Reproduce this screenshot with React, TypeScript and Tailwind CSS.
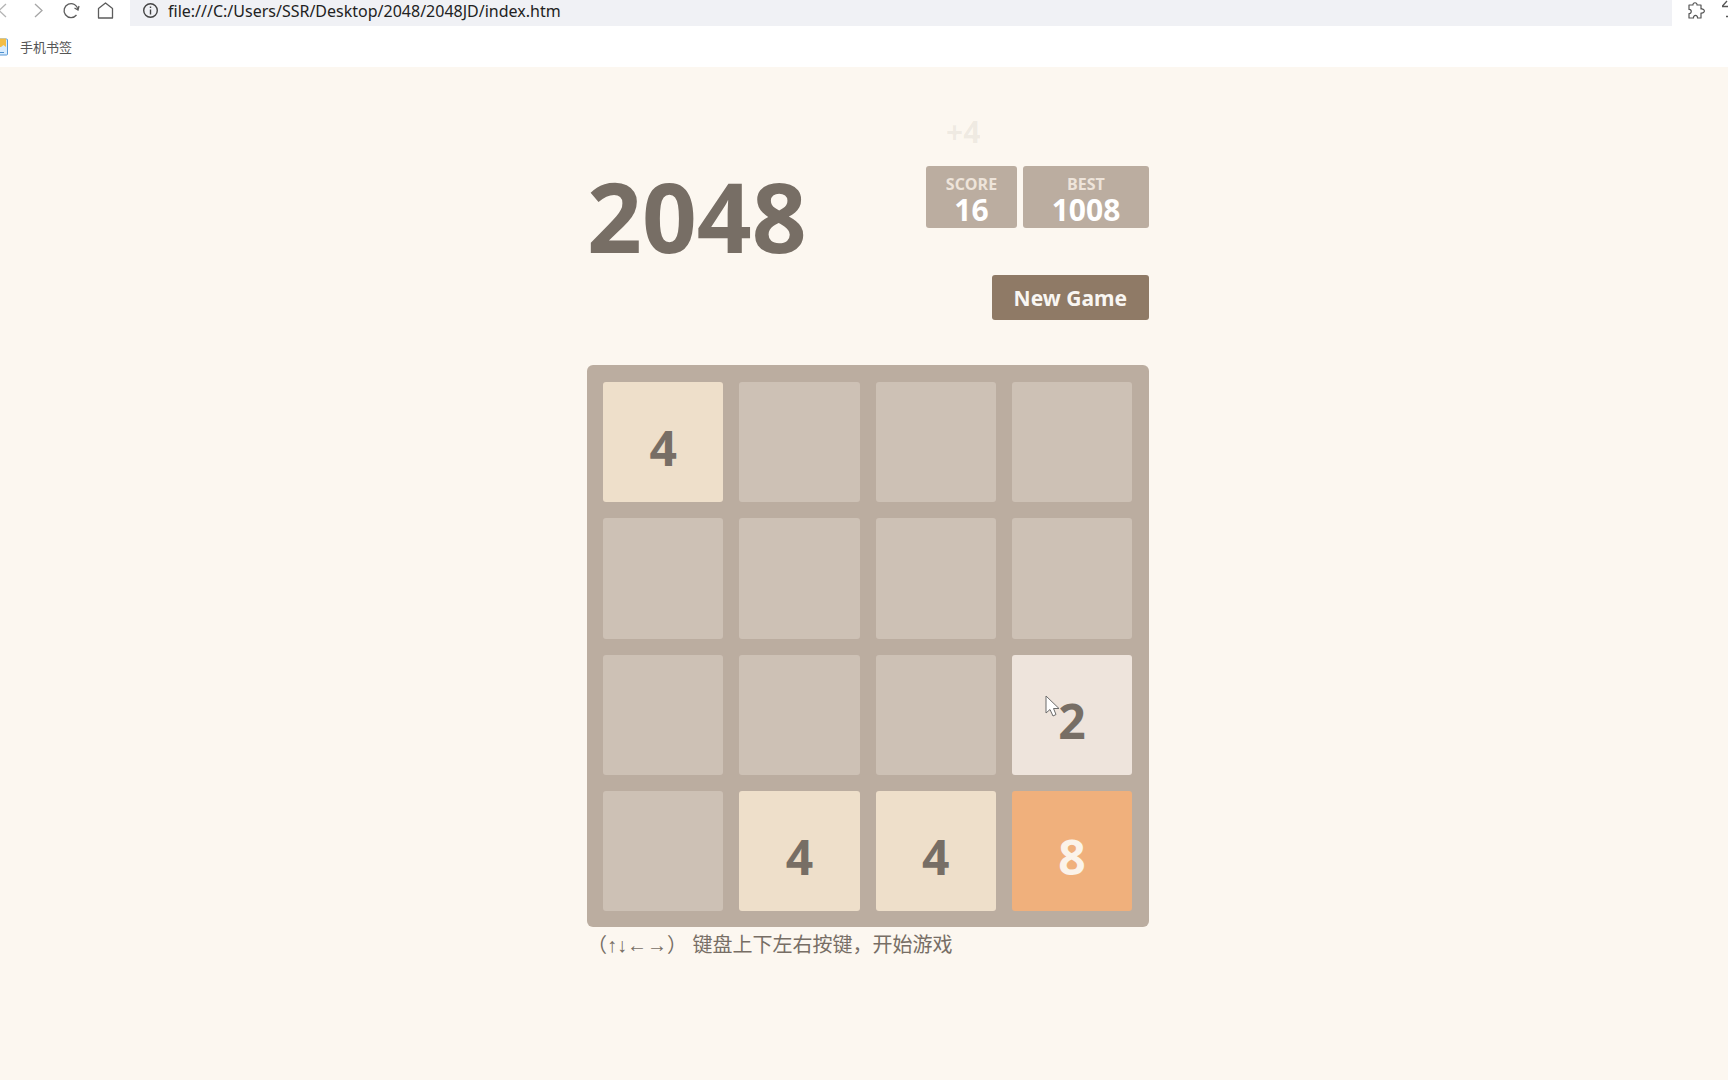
const LETTER = "font-['Noto_Sans','Noto_Sans_CJK_SC',sans-serif]";

const cells = [4, 0, 0, 0, 0, 0, 0, 0, 0, 0, 0, 2, 0, 4, 4, 8];

const tileStyles: Record<number, string> = {
  2: "bg-[#eee4dc] text-[#776e65]",
  4: "bg-[#eedfca] text-[#776e65]",
  8: "bg-[#f0b07c] text-[#fbf3ea]",
};

function Browser() {
  return (
    <header className="bg-white">
      {/* Address bar */}
      <div className="flex h-[26px] items-start text-[#5c5c5c]">
        <nav className="flex w-[130px] shrink-0 items-start">
          <button aria-label="Back" className="h-[22px] w-[18px]">
            <svg width="18" height="22" viewBox="0 0 18 22" fill="none" stroke="#b4b4b4" strokeWidth="1.3">
              <path d="M6 4L-1 10.5L6 17" />
            </svg>
          </button>
          <button aria-label="Forward" className="h-[22px] w-[42px]">
            <svg width="42" height="22" viewBox="0 0 42 22" fill="none" stroke="#a6a6a6" strokeWidth="1.3">
              <path d="M17 4L24 10.5L17 17" />
            </svg>
          </button>
          <button aria-label="Reload" className="h-[22px] w-[34px]">
            <svg width="34" height="22" viewBox="0 0 34 22" fill="none" stroke="#5c5c5c" strokeWidth="1.3">
              <path d="M16.5 15A7 7 0 1 1 18 9.5M14.5 8L18 10L19 6" />
            </svg>
          </button>
          <button aria-label="Home" className="h-[22px] w-[34px]">
            <svg width="34" height="22" viewBox="0 0 34 22" fill="none" stroke="#5c5c5c" strokeWidth="1.3" strokeLinejoin="round">
              <path d="M4.5 8.5L11.5 3L18.5 8.5V18H4.5Z" />
            </svg>
          </button>
        </nav>
        <div className="flex h-[26px] flex-1 items-start bg-[#f0f1f5] pl-3">
          <svg className="shrink-0" width="26" height="22" viewBox="0 0 26 22" fill="none" stroke="#444" strokeWidth="1.4">
            <circle cx="8.5" cy="10.5" r="6.8" />
            <path d="M8.5 9.5V14.5M8.5 6.5V8" />
          </svg>
          <input
            aria-label="Address"
            className="h-[22px] min-w-0 flex-1 bg-transparent text-base leading-[22px] text-[#222] outline-none"
            defaultValue="file:///C:/Users/SSR/Desktop/2048/2048JD/index.htm"
          />
        </div>
        <div className="flex w-14 shrink-0 items-start overflow-hidden pl-4">
          <button aria-label="Extensions" className="h-[22px] w-[34px] shrink-0">
            <svg width="18" height="22" viewBox="0 0 18 22" fill="none" stroke="#555" strokeWidth="1.2" strokeLinejoin="round">
              <path d="M1 5H5C4.5 2 9.5 2 9 5H13V9C17.5 8.5 17.5 13.5 13 13V18H9.5C10 14.5 5 14.5 5.5 18H1V13.5C4 14 4 9 1 9.5Z" />
            </svg>
          </button>
          <button aria-label="Undo" className="h-[22px] w-5 shrink-0">
            <svg width="20" height="22" viewBox="0 0 20 22" fill="none" stroke="#555" strokeWidth="1.3">
              <path d="M5 1L0 6.5H12M4 16.5H8" />
            </svg>
          </button>
        </div>
      </div>
      {/* Bookmarks */}
      <div className="flex h-[41px] items-center">
        <a href="#bookmarks" className="flex items-center gap-3 text-[13px] leading-5 text-[#555]">
          <svg width="8" height="18" viewBox="0 0 8 18">
            <rect x="-8" y="1" width="15.5" height="16" rx="1" fill="#d9ecfd" stroke="#5a98d4" />
            <path d="M0 0.5H6V9L3.5 7L1 9H0Z" fill="#f3bd45" />
            <path d="M0 14.5H4" stroke="#4b8fd0" />
          </svg>
          手机书签
        </a>
      </div>
    </header>
  );
}

function ScoreBox({ label, value, gain, size }: { label: string; value: number; gain?: number; size: string }) {
  return (
    <div className={`relative h-[62px] rounded-[3px] bg-[#bbada0] pt-2 text-center font-bold ${size}`}>
      <div className="font-['Open_Sans',sans-serif] text-base leading-5 text-[#eee4da]">{label}</div>
      <div className="text-3xl leading-8 text-white">{value}</div>
      {gain && (
        <div className="absolute -top-[54px] left-5 text-3xl leading-10 text-[#776e65]/10">+{gain}</div>
      )}
    </div>
  );
}

function Board() {
  return (
    <div className="grid grid-cols-4 gap-4 rounded-md bg-[#bbada0] p-4 pt-[17px] pr-[17px]">
      {cells.map((value, i) => (
        <div
          key={i}
          className={`relative flex aspect-square items-center justify-center rounded-[3px] pt-3 text-5xl font-bold ${
            tileStyles[value] ?? "bg-[#cdc1b5]"
          }`}
        >
          {value > 0 && value}
          {value === 2 && (
            <svg className="absolute top-10 left-8" width="18" height="24" viewBox="0 0 18 24" fill="white" stroke="#6b6b6b" strokeLinejoin="round">
              <path d="M2 1V18L6 14.5L9 21L12 19.5L9.5 13.5H15Z" />
            </svg>
          )}
        </div>
      ))}
    </div>
  );
}

export default function App() {
  return (
    <div className={`min-h-screen overflow-hidden bg-[#fcf7f0] text-[#776e65] ${LETTER}`}>
      <Browser />
      <main className="mx-auto w-full max-w-[562px] translate-x-1 pt-[99px]">
        <div className="flex items-start justify-between">
          <h1 className="text-8xl leading-[100px] font-bold">2048</h1>
          <div className="flex flex-col items-end gap-[47px]">
            <div className="flex gap-1.5">
              <ScoreBox label="SCORE" value={16} gain={4} size="w-[91px]" />
              <ScoreBox label="BEST" value={1008} size="w-[126px]" />
            </div>
            <button className="h-[45px] rounded-[3px] bg-[#8f7a66] px-[22px] pt-0.5 text-[21px] font-bold text-[#f9f6f2]">
              New Game
            </button>
          </div>
        </div>
        <div className="mt-[45px]">
          <Board />
        </div>
        <p className="mt-0.5 font-['Liberation_Sans','Noto_Sans_CJK_SC',sans-serif] text-xl leading-8">
          （↑↓←→） 键盘上下左右按键，开始游戏
        </p>
      </main>
    </div>
  );
}
